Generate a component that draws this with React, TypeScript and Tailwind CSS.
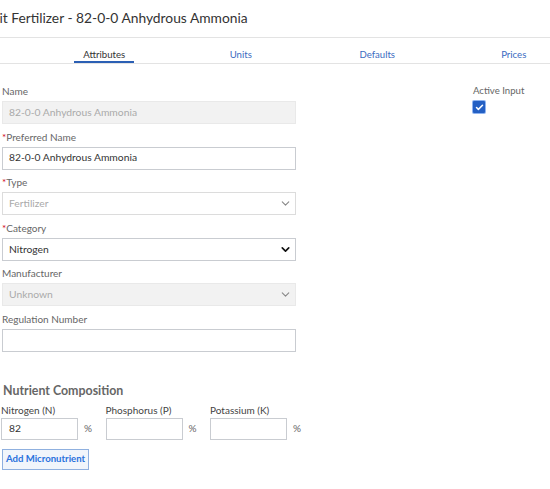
import { ChevronDown, Check } from 'lucide-react';

const tabs = ['Attributes', 'Units', 'Defaults', 'Prices'];

function Label({ text, required }: { text: string; required?: boolean }) {
	return (
		<div className="h-[16px] text-[10px] leading-[16px] text-[#666]">
			{required && <span className="text-[#d0021b]">*</span>}
			{text}
		</div>
	);
}

function TextField({
	label,
	value,
	required,
	disabled,
}: {
	label: string;
	value: string;
	required?: boolean;
	disabled?: boolean;
}) {
	return (
		<div className="mb-[4.6px]">
			<Label text={label} required={required} />
			<div
				className={`mt-[2px] flex h-[23px] items-center border px-[6px] text-[10.3px] ${
					disabled
						? 'border-[#e9e9e9] bg-[#f2f2f2] text-[#aaa]'
						: 'border-[#c9ccd1] bg-white text-[#333]'
				}`}>
				{value}
			</div>
		</div>
	);
}

function SelectField({
	label,
	value,
	required,
	disabled,
	muted,
}: {
	label: string;
	value: string;
	required?: boolean;
	disabled?: boolean;
	muted?: boolean;
}) {
	const dim = disabled || muted;
	return (
		<div className="mb-[4.6px]">
			<Label text={label} required={required} />
			<div
				className={`mt-[2px] flex h-[23px] items-center justify-between border pl-[6px] pr-[3px] text-[10.3px] ${
					disabled
						? 'border-[#e9e9e9] bg-[#f2f2f2] text-[#aaa]'
						: muted
							? 'border-[#dcdcdc] bg-white text-[#aaa]'
							: 'border-[#c9ccd1] bg-white text-[#333]'
				}`}>
				<span>{value}</span>
				<ChevronDown
					className={dim ? 'h-[13px] w-[13px] text-[#888]' : 'h-[13px] w-[13px] text-[#111]'}
					strokeWidth={dim ? 2 : 3}
				/>
			</div>
		</div>
	);
}

function Nutrient({ label, value }: { label: string; value: string }) {
	return (
		<div className="w-[104.5px]">
			<div className="h-[15px] text-[10px] leading-[15px] text-[#444]">{label}</div>
			<div className="flex items-center">
				<div className="flex h-[22px] w-[77px] items-center border border-[#c9ccd1] bg-white px-[7px] text-[10.3px] text-[#333]">
					{value}
				</div>
				<span className="ml-[6px] text-[10px] text-[#666]">%</span>
			</div>
		</div>
	);
}

export default function App() {
	return (
		<div
			className="h-[489px] w-[550px] overflow-hidden bg-white"
			style={{ fontFamily: 'Lato, "Open Sans", sans-serif' }}>
			<div className="ml-[-16px] h-[37px] whitespace-nowrap pt-[8px] text-[13.8px] leading-[20px] text-[#333]">
				Edit Fertilizer - 82-0-0 Anhydrous Ammonia
			</div>
			<div className="border-b border-t border-[#e3e3e3]">
				<div className="ml-[36px] flex w-[546px]">
					{tabs.map((t, i) => (
						<div key={t} className="flex flex-1 justify-center">
							<div
								className={`pb-[0px] pt-[11px] text-[9.6px] leading-[12px] ${
									i === 0
										? 'w-[60px] border-b-[2px] border-[#2b5fb4] text-center text-[#333]'
										: 'border-b-[2px] border-transparent text-[#3a6bc1]'
								}`}>
								{t}
							</div>
						</div>
					))}
				</div>
			</div>
			<div className="flex pt-[19px]">
				<div className="ml-[2px] w-[294px]">
					<TextField label="Name" value="82-0-0 Anhydrous Ammonia" disabled />
					<TextField label="Preferred Name" value="82-0-0 Anhydrous Ammonia" required />
					<SelectField label="Type" value="Fertilizer" required muted />
					<SelectField label="Category" value="Nitrogen" required />
					<SelectField label="Manufacturer" value="Unknown" disabled />
					<TextField label="Regulation Number" value="" />
				</div>
				<div className="ml-[177px]">
					<div className="h-[16px] text-[9.6px] leading-[16px] text-[#666]">Active Input</div>
					<div className="mt-[2px] flex h-[12px] w-[12px] items-center justify-center rounded-[1px] bg-[#2460c4] ring-1 ring-[#8fb4f0]">
						<Check className="h-[9px] w-[9px] text-white" strokeWidth={4} />
					</div>
				</div>
			</div>
			<div className="ml-[3px] mt-[25px] text-[12.4px] font-bold leading-[18px] text-[#666]">
				Nutrient Composition
			</div>
			<div className="ml-[1px] mt-[3px] flex">
				<Nutrient label="Nitrogen (N)" value="82" />
				<Nutrient label="Phosphorus (P)" value="" />
				<Nutrient label="Potassium (K)" value="" />
			</div>
			<button className="ml-[2px] mt-[9px] h-[21px] w-[87px] border border-[#8fb0df] bg-[#f1f5fb] text-[9.6px] font-bold text-[#2a72dd]">
				Add Micronutrient
			</button>
		</div>
	);
}
